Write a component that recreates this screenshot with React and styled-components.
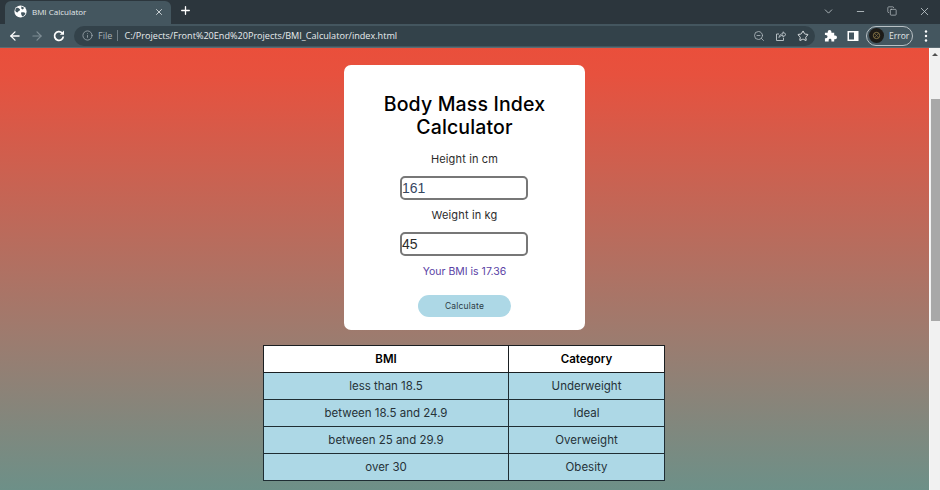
import React from 'react';
import styled, { createGlobalStyle } from 'styled-components';
import { ArrowLeft, ArrowRight, Info, ZoomOut, Star, X, Plus, Minus, ChevronDown, Copy } from 'lucide-react';

const GlobalStyle = createGlobalStyle`
    html, body { margin: 0; padding: 0; height: 100%; overflow: hidden; }
    body { font-family: "Inter", "Open Sans", sans-serif; }
    #root { height: 100%; }
`;

const Window = styled.div`
    width: 940px;
    height: 490px;
    display: flex;
    flex-direction: column;
    overflow: hidden;
`;

const TabBar = styled.div`
    height: 24px;
    flex: none;
    background: #2c363d;
    display: flex;
    align-items: flex-end;
    padding-left: 5px;
    color: #fff;
`;

const Tab = styled.div`
    width: 166px;
    height: 23px;
    box-sizing: border-box;
    background: #44565f;
    border-radius: 6px 6px 0 0;
    display: flex;
    align-items: center;
    padding: 0 7px 2px 9px;
    font-family: "Open Sans", sans-serif;
    font-size: 8px;
    color: #e3e8ea;
`;

const TabTitle = styled.span`
    flex: 1;
    margin-left: 5px;
`;

const NewTab = styled.div`
    margin: 0 0 3px 8px;
    height: 21px;
    display: flex;
    align-items: center;
`;

const WindowControls = styled.div`
    margin-left: auto;
    height: 22px;
    display: flex;
    align-items: center;
    margin-bottom: 2px;
    color: #c4ccd0;
`;

const ControlSlot = styled.div`
    width: 32px;
    display: flex;
    justify-content: center;
`;

const Toolbar = styled.div`
    height: 24px;
    flex: none;
    box-sizing: border-box;
    background: #44565f;
    border-bottom: 1px solid #5b6b73;
    display: flex;
    align-items: center;
    padding: 0 6px 0 8px;
    color: #fff;
`;

const NavButton = styled.div`
    width: 14px;
    display: flex;
    justify-content: center;
    margin-right: ${({ $gap }) => $gap}px;
    color: ${({ $dim }) => ($dim ? '#7f8e96' : '#fff')};
`;

const Omnibox = styled.div`
    width: 741px;
    height: 20px;
    box-sizing: border-box;
    margin-left: 8px;
    background: #33424a;
    border-radius: 10px;
    display: flex;
    align-items: center;
    padding: 0 6px 0 8px;
    font-family: "Open Sans", sans-serif;
    font-size: 9.1px;
    color: #e8ecee;
    flex: none;
`;

const FileLabel = styled.span`
    margin-left: 5px;
    color: #aab4b9;
    padding-right: 5px;
    border-right: 1px solid #6f7d85;
    line-height: 11px;
`;

const Url = styled.span`
    margin-left: 6px;
    flex: 1;
`;

const OmniIcons = styled.div`
    display: flex;
    align-items: center;
    gap: 10px;
    color: #b4bdc2;
`;

const ToolIcons = styled.div`
    display: flex;
    align-items: center;
    margin-left: 9px;
    gap: 10px;
    color: #fff;
`;

const ProfileChip = styled.div`
    width: 47px;
    height: 20px;
    box-sizing: border-box;
    margin-left: 7px;
    border: 1px solid #b9c1c5;
    border-radius: 10px;
    display: flex;
    align-items: center;
    padding-left: 2px;
    font-family: "Open Sans", sans-serif;
    font-size: 8.5px;
    color: #e3e8ea;
`;

const Avatar = styled.div`
    width: 15px;
    height: 15px;
    border-radius: 50%;
    background: #1d1b18;
    margin-right: 5px;
    flex: none;
    display: flex;
    align-items: center;
    justify-content: center;
`;

const MenuDots = styled.div`
    margin-left: 11px;
    display: flex;
`;

const Viewport = styled.div`
    flex: 1;
    display: flex;
    min-height: 0;
`;

const Page = styled.main`
    flex: 1;
    background: linear-gradient(180deg, #ea4f3b 0%, #e7513e 6%, #a07a6d 63%, #6d9088 100%);
    display: flex;
    flex-direction: column;
    align-items: center;
    padding-top: 17px;
    box-sizing: border-box;
`;

const Card = styled.section`
    width: 241px;
    height: 265px;
    box-sizing: border-box;
    background: #fff;
    border-radius: 7px;
    display: flex;
    flex-direction: column;
    align-items: center;
    padding-top: 28px;
`;

const Title = styled.h1`
    margin: 0;
    font-size: 19.5px;
    line-height: 22.5px;
    font-weight: 500;
    letter-spacing: 0.15px;
    color: #000;
    text-align: center;
`;

const FieldLabel = styled.label`
    margin-top: ${({ $top }) => $top}px;
    font-size: 11px;
    line-height: 14px;
    letter-spacing: 0.15px;
    color: #2b2b2b;
`;

const NumberInput = styled.input`
    width: 128px;
    height: 24px;
    box-sizing: border-box;
    margin: 10px 1px 0 0;
    padding: 0;
    border: 2px solid #777;
    border-radius: 5px;
    background: #fff;
    font-family: "Liberation Sans", Arial, sans-serif;
    font-size: 14px;
    color: ${({ $tint }) => $tint};
    outline: none;
`;

const Result = styled.p`
    margin: 9px 0 0;
    font-size: 10.5px;
    line-height: 14px;
    color: #5a3fa5;
`;

const CalcButton = styled.button`
    width: 93px;
    height: 22px;
    margin-top: 16px;
    padding: 0;
    border: 0;
    border-radius: 11px;
    background: #add8e6;
    font-family: inherit;
    font-size: 8.5px;
    letter-spacing: 0.2px;
    color: #2b3a44;
`;

const Table = styled.table`
    width: 402px;
    margin: 15px 1px 0 0;
    border-collapse: collapse;
    table-layout: fixed;
    font-size: 11.5px;
    text-align: center;
`;

const BmiCol = styled.col`
    width: 245px;
`;

const Head = styled.th`
    height: 26px;
    padding: 0;
    background: #fff;
    border: 1px solid #1a1f22;
    font-weight: 600;
    color: #000;
`;

const Cell = styled.td`
    height: 26px;
    padding: 0;
    background: #add8e6;
    border: 1px solid #1f2d33;
    color: #263238;
`;

const Scrollbar = styled.div`
    width: 11px;
    flex: none;
    box-sizing: border-box;
    background: #f1f1f1;
    border-left: 1px solid #fafafa;
    display: flex;
    flex-direction: column;
    align-items: center;
`;

const ScrollArrow = styled.div`
    margin-top: 5px;
    width: 0;
    height: 0;
    border-left: 3px solid transparent;
    border-right: 3px solid transparent;
    border-bottom: 3px solid #505050;
`;

const ScrollThumb = styled.div`
    width: 9px;
    height: 222px;
    margin-top: 43px;
    background: #a8a8a8;
`;

const rows = [
    ['less than 18.5', 'Underweight'],
    ['between 18.5 and 24.9', 'Ideal'],
    ['between 25 and 29.9', 'Overweight'],
    ['over 30', 'Obesity'],
];

const Globe = () => (
    <svg width="13" height="13" viewBox="0 0 16 16">
        <circle cx="8" cy="8" r="7.5" fill="#fff" />
        <path d="M3 3.500c2 0 3 .5 4 1.500s0 2-1 2.500-1 2-2.500 1.500S1.500 7 1.500 6zM9 1.500c1 1 2.500 1 3.500 2l-1.500 2-2-1zM9 9c2-.5 4 0 5 1-.5 2-2 3.500-3.500 4.200C9.500 13 8 11 9 9z" fill="#44565f" />
    </svg>
);

const Reload = () => (
    <svg width="14" height="14" viewBox="0 0 14 14" fill="none">
        <path d="M11.300 7.500A4.400 4.400 0 1 1 10 3.800" stroke="#fff" strokeWidth="1.800" />
        <path d="M12 1.500v4.200H7.800z" fill="#fff" />
    </svg>
);

const ShareBox = () => (
    <svg width="12" height="12" viewBox="0 0 12 12" fill="none" stroke="currentColor" strokeWidth="1">
        <path d="M4 4H1.500v6.500h7V8" />
        <path d="M4 7.500C4.300 5 6 3.800 8 3.800V1.800l3 2.700-3 2.700V5.300C6.500 5.300 5 6 4 7.500z" />
    </svg>
);

const PuzzleSolid = () => (
    <svg width="13" height="13" viewBox="0 0 14 14">
        <path d="M1 4h3V3a2 2 0 0 1 4 0v1h3v3h1a2 2 0 0 1 0 4h-1v2.500H8V12a1.500 1.500 0 0 0-3 0v1.500H1V10h1a1.800 1.800 0 0 0 0-3.600H1z" fill="#fff" />
    </svg>
);

const SidePanel = () => (
    <svg width="12" height="12" viewBox="0 0 12 12">
        <rect x="0.500" y="1" width="11" height="10" fill="#fff" />
        <rect x="2" y="2.500" width="5" height="7" fill="#44565f" />
    </svg>
);

const Dots = () => (
    <svg width="4" height="14" viewBox="0 0 4 14">
        <circle cx="2" cy="2.500" r="1.200" fill="#fff" />
        <circle cx="2" cy="7" r="1.200" fill="#fff" />
        <circle cx="2" cy="11.500" r="1.200" fill="#fff" />
    </svg>
);

const App = () => (
    <Window>
        <GlobalStyle />
        <TabBar>
            <Tab>
                <Globe />
                <TabTitle>BMI Calculator</TabTitle>
                <X size={10} strokeWidth={2} />
            </Tab>
            <NewTab><Plus size={13} strokeWidth={2.4} /></NewTab>
            <WindowControls>
                <ControlSlot><ChevronDown size={13} strokeWidth={1.5} /></ControlSlot>
                <ControlSlot><Minus size={11} strokeWidth={1.8} /></ControlSlot>
                <ControlSlot><Copy size={10} strokeWidth={1.6} /></ControlSlot>
                <ControlSlot><X size={13} strokeWidth={1.5} /></ControlSlot>
            </WindowControls>
        </TabBar>
        <Toolbar>
            <NavButton $gap={8}><ArrowLeft size={14} strokeWidth={2.2} /></NavButton>
            <NavButton $gap={8} $dim><ArrowRight size={14} strokeWidth={2} /></NavButton>
            <NavButton $gap={0}><Reload /></NavButton>
            <Omnibox>
                <Info size={11} strokeWidth={1.6} color="#aab4b9" />
                <FileLabel>File</FileLabel>
                <Url>C:/Projects/Front%20End%20Projects/BMI_Calculator/index.html</Url>
                <OmniIcons>
                    <ZoomOut size={12} strokeWidth={1.6} />
                    <ShareBox />
                    <Star size={12} strokeWidth={2} color="#dfe4e6" />
                </OmniIcons>
            </Omnibox>
            <ToolIcons>
                <PuzzleSolid />
                <SidePanel />
            </ToolIcons>
            <ProfileChip>
                <Avatar>
                    <svg width="9" height="9" viewBox="0 0 10 10">
                        <circle cx="5" cy="5" r="3.500" fill="none" stroke="#8d7a48" strokeWidth="1" />
                        <path d="M2.500 2.500l5 5M7.500 2.500l-5 5" stroke="#7d6d45" strokeWidth="0.800" />
                    </svg>
                </Avatar>
                Error
            </ProfileChip>
            <MenuDots><Dots /></MenuDots>
        </Toolbar>
        <Viewport>
            <Page>
                <Card>
                    <Title>Body Mass Index<br />Calculator</Title>
                    <FieldLabel htmlFor="height" $top={14}>Height in cm</FieldLabel>
                    <NumberInput id="height" defaultValue="161" $tint="#36465f" />
                    <FieldLabel htmlFor="weight" $top={8}>Weight in kg</FieldLabel>
                    <NumberInput id="weight" defaultValue="45" $tint="#2b2b2b" />
                    <Result>Your BMI is 17.36</Result>
                    <CalcButton>Calculate</CalcButton>
                </Card>
                <Table>
                    <colgroup>
                        <BmiCol />
                        <col />
                    </colgroup>
                    <thead>
                        <tr>
                            <Head>BMI</Head>
                            <Head>Category</Head>
                        </tr>
                    </thead>
                    <tbody>
                        {rows.map(([range, category]) => (
                            <tr key={category}>
                                <Cell>{range}</Cell>
                                <Cell>{category}</Cell>
                            </tr>
                        ))}
                    </tbody>
                </Table>
            </Page>
            <Scrollbar>
                <ScrollArrow />
                <ScrollThumb />
            </Scrollbar>
        </Viewport>
    </Window>
);

export default App;
